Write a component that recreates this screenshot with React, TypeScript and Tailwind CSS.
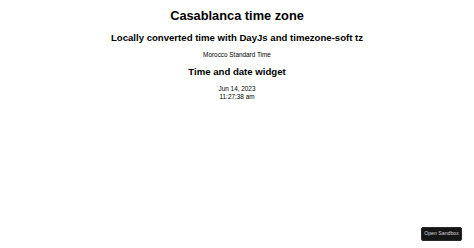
const App = () => {
  return (
    <div className="min-h-[248px] bg-white text-black text-center font-['Liberation_Sans',Arial,sans-serif]">
      <div className="flex flex-col items-center pt-[8.6px]">
        <h1 className="text-[12.8px] leading-[14.72px] font-bold">Casablanca time zone</h1>
        <h2 className="mt-[8.6px] text-[9.6px] leading-[11.04px] font-bold">
          Locally converted time with DayJs and timezone-soft tz
        </h2>
        <p className="mt-[8px] text-[6.4px] leading-[7.36px]">Morocco Standard Time</p>
        <h2 className="mt-[8px] text-[9.6px] leading-[11.04px] font-bold">Time and date widget</h2>
        <div className="mt-[8px] text-[6.4px] leading-[7.36px]">
          <div>Jun 14, 2023</div>
          <div>11:27:38 am</div>
        </div>
      </div>

      {/* sandbox badge */}
      <button className="fixed right-[12px] bottom-[7px] h-[14px] w-[41px] rounded-[2px] bg-[#151515] text-[5.2px] text-[#d6d6d6] leading-none border border-[#2a2a2a]">
        Open Sandbox
      </button>
    </div>
  );
};

export default App;
